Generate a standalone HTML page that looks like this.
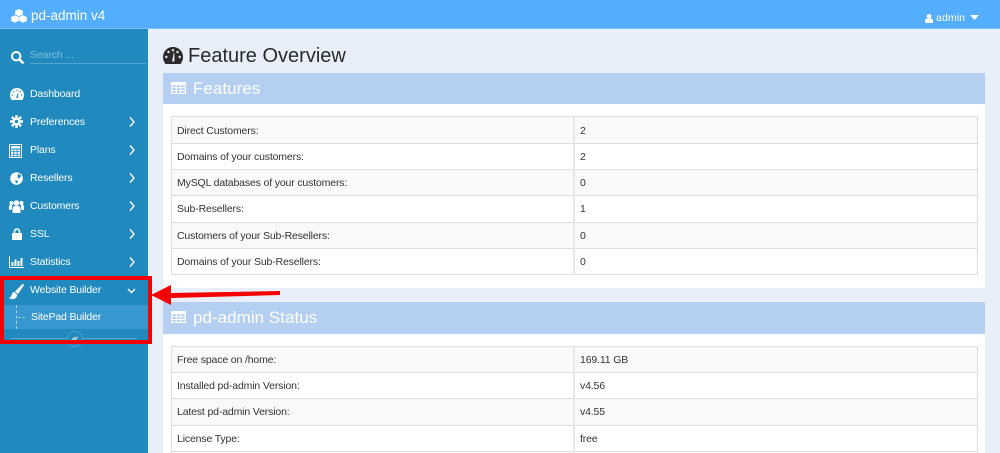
<!DOCTYPE html>
<html>
<head>
<meta charset="utf-8">
<style>
html,body{margin:0;padding:0;width:1000px;height:453px;overflow:hidden;background:#e8eff9;font-family:"Liberation Sans",sans-serif}
#wrap{position:relative;width:1000px;height:453px;overflow:hidden;background:#e8eff9}
.a{position:absolute}
.t{position:absolute;white-space:nowrap;line-height:14px}
#top{left:0;top:0;width:1000px;height:29px;background:#54aeff;border-bottom:1px solid #7fc0f5;box-sizing:border-box}
#side{left:0;top:29px;width:148px;height:424px;background:#2089bd}
.m{color:#fff;font-size:10.5px;left:30px;letter-spacing:-.15px}
.r{position:absolute;left:171px;width:807px;box-sizing:border-box;border:1px solid #dfdfdf;background:#fff}
.c{color:#333;font-size:10.5px;letter-spacing:-.15px;left:177px}
.v{color:#333;font-size:10.5px;letter-spacing:-.15px;left:580px}
.h{color:#fff;font-size:17px;line-height:18px;letter-spacing:.03px;left:193px}
svg{position:absolute;overflow:visible}
</style>
</head>
<body>
<div id="wrap">
<div class="a" id="top"></div>
<div class="a" id="side"></div>

<!-- logo -->
<svg style="left:11px;top:9px" width="16" height="14" viewBox="0 0 16 14" fill="#fff"><path d="M8 0l3.800 1.700v3.800L8 7.200 4.200 5.500V1.700z"/><path d="M4 6.200l3.800 1.700v3.900L4 13.800.2 12V7.900z"/><path d="M12 6.200l3.800 1.700V12L12 13.800 8.200 11.800V7.900z"/></svg>
<div class="t" style="left:31px;top:9px;color:#fff;font-size:13.5px;letter-spacing:0">pd-admin v4</div>

<!-- admin -->
<svg style="left:925px;top:14px" width="8" height="9" viewBox="0 0 8 9" fill="#fff"><circle cx="4" cy="2.400" r="2.400"/><path d="M0 9V6.500C0 5.300 1 4.800 2 4.800h4c1 0 2 .5 2 1.700V9z"/></svg>
<div class="t" style="left:936px;top:11px;color:#fff;font-size:10.5px;letter-spacing:.1px">admin</div>
<svg style="left:970px;top:15px" width="9" height="5" viewBox="0 0 9 5" fill="#fff"><path d="M0 0h9L4.500 5z"/></svg>

<!-- search -->
<svg style="left:11px;top:51px" width="13" height="13" viewBox="0 0 13 13" fill="none" stroke="#fff"><circle cx="5.200" cy="5.200" r="4.200" stroke-width="2"/><path d="M8.500 8.500l4 4" stroke-width="2.600"/></svg>
<div class="t" style="left:30px;top:48px;color:#7ec0e3;font-size:10.5px;letter-spacing:-.1px">Search ...</div>
<div class="a" style="left:30px;top:63px;width:116px;height:1px;background:#53a6d1"></div>

<!-- menu icons -->
<svg style="left:10px;top:88px" width="14" height="12" viewBox="0 0 14 12"><path fill="#fff" d="M7 0C3 0 0 3 0 7c0 2 .7 3.700 1.800 5h10.400C13.300 10.700 14 9 14 7c0-4-3-7-7-7z"/><g fill="#2089bd"><circle cx="2.300" cy="7" r=".7"/><circle cx="3.800" cy="3.800" r=".7"/><circle cx="7" cy="2.300" r=".7"/><circle cx="10.200" cy="3.800" r=".7"/><circle cx="11.700" cy="7" r=".7"/><path d="M6.200 10l1.700-5.500.4.100L8 10z"/></g></svg>
<div class="t m" style="top:87px">Dashboard</div>

<svg style="left:10px;top:115px" width="13" height="13" viewBox="0 0 13 13"><path stroke="#fff" stroke-width="2.400" d="M6.500 0v13M0 6.500h13M1.900 1.900l9.200 9.200M11.100 1.900l-9.200 9.200"/><circle cx="6.500" cy="6.500" r="3.900" fill="#fff"/><circle cx="6.500" cy="6.500" r="1.700" fill="#2089bd"/></svg>
<div class="t m" style="top:115px">Preferences</div>

<svg style="left:9px;top:144px" width="13" height="14" viewBox="0 0 13 14"><rect x=".5" y=".5" width="12" height="13" fill="#2089bd" stroke="#fff"/><rect x="2" y="2" width="9" height="2.500" fill="#fff"/><g fill="#fff"><rect x="2" y="5.500" width="2.400" height="1.800"/><rect x="5.300" y="5.500" width="2.400" height="1.800"/><rect x="8.600" y="5.500" width="2.400" height="1.800"/><rect x="2" y="8" width="2.400" height="1.800"/><rect x="5.300" y="8" width="2.400" height="1.800"/><rect x="8.600" y="8" width="2.400" height="1.800"/><rect x="2" y="10.500" width="2.400" height="1.800"/><rect x="5.300" y="10.500" width="2.400" height="1.800"/><rect x="8.600" y="10.500" width="2.400" height="1.800"/></g></svg>
<div class="t m" style="top:143px">Plans</div>

<svg style="left:10px;top:172px" width="13" height="13" viewBox="0 0 13 13"><circle cx="6.500" cy="6.500" r="6.300" fill="#fff"/><path fill="#2089bd" d="M8 1.500l3 2-1.300 3-2.200-1zM5.500 8l2.500 1-1 2.500-1.500-1z"/></svg>
<div class="t m" style="top:171px">Resellers</div>

<svg style="left:9px;top:200px" width="15" height="13" viewBox="0 0 15 13" fill="#fff"><circle cx="7.500" cy="3" r="2.800"/><circle cx="2.500" cy="3" r="2"/><circle cx="12.500" cy="3" r="2"/><path d="M3.500 13V8.500C3.500 7 5 6 6 6h3c1 0 2.500 1 2.500 2.500V13z"/><path d="M0 10V6.500c0-1 .8-1.700 1.700-1.700h1.500L2.600 10zM15 10V6.500c0-1-.8-1.700-1.700-1.700h-1.500l.6 5.200z"/></svg>
<div class="t m" style="top:199px">Customers</div>

<svg style="left:12px;top:228px" width="10" height="12" viewBox="0 0 10 12"><path fill="#fff" d="M0 5h10v7H0z"/><path fill="none" stroke="#fff" stroke-width="1.600" d="M2.500 5.500V3.500a2.500 2.500 0 0 1 5 0v2"/></svg>
<div class="t m" style="top:227px">SSL</div>

<svg style="left:9px;top:256px" width="15" height="12" viewBox="0 0 15 12" fill="#fff"><path d="M0 0h1v11h14v1H0z"/><rect x="2.500" y="6" width="2" height="4"/><rect x="5.500" y="3.500" width="2" height="6.500"/><rect x="8.500" y="5" width="2" height="5"/><rect x="11.500" y="2" width="2" height="8"/></svg>
<div class="t m" style="top:255px">Statistics</div>

<!-- chevrons -->
<svg style="left:129px;top:117px" width="7" height="155" fill="none" stroke="#fff" stroke-width="1.400"><path d="M1 .5l4 4.500-4 4.500M1 28.500l4 4.500-4 4.500M1 56.500l4 4.500-4 4.500M1 84.500l4 4.500-4 4.500M1 112.500l4 4.500-4 4.500M1 140.500l4 4.500-4 4.500"/></svg>

<!-- website builder -->
<div class="a" style="left:0;top:276px;width:148px;height:29px;background:#2089bd"></div>
<svg style="left:9px;top:284px" width="15" height="16" viewBox="0 0 15 16" fill="#fff"><path d="M14.600.3c.5.4.3 1.200-.3 2L9 10 6 7.500 12.800.8c.7-.6 1.400-.9 1.800-.5z"/><path d="M5.300 8C3 8.300 2.800 10 2.500 11.500 2.200 13 1 13.500 0 14c2.500 2 7.500 1.800 8.300-3.300z"/></svg>
<div class="t m" style="top:283px">Website Builder</div>
<svg style="left:127px;top:288px" width="9" height="6" fill="none" stroke="#fff" stroke-width="1.400"><path d="M1 1l3.500 3.500L8 1"/></svg>

<div class="a" style="left:0;top:305px;width:148px;height:24px;background:#3698cf"></div>
<div class="a" style="left:16px;top:305px;width:0;height:24px;border-left:1px dashed #a8d4ec"></div>
<div class="a" style="left:18px;top:317px;width:7px;height:0;border-top:1px dashed #a8d4ec"></div>
<div class="t m" style="left:31px;top:310px">SitePad Builder</div>

<!-- collapse -->
<div class="a" style="left:11px;top:338px;width:126px;height:1px;background:#5aa9d2"></div>
<div class="a" style="left:67px;top:331px;width:14px;height:14px;border:1px solid #4da2cd;border-radius:50%;background:#2089bd"></div>
<svg style="left:71px;top:336px" width="7" height="5" fill="none" stroke="#fff" stroke-width="1"><path d="M1 4l3-3M3.500 4l3-3"/></svg>

<!-- title -->
<svg style="left:163px;top:47px" width="20" height="17" viewBox="0 0 20 17"><path fill="#2b2b2b" d="M10 0C4.500 0 0 4.300 0 10c0 2.600.9 5 2.500 7h15c1.600-2 2.500-4.400 2.500-7 0-5.700-4.500-10-10-10z"/><g fill="#e8eff9"><circle cx="3.300" cy="10" r="1.200"/><circle cx="5.500" cy="5" r="1.200"/><circle cx="10" cy="3.200" r="1.200"/><circle cx="14.500" cy="5" r="1.200"/><circle cx="16.700" cy="10" r="1.200"/><path d="M9 14.500l1.800-9 .5.100L11.500 14.500z"/></g></svg>
<div class="t" style="left:188px;top:44px;color:#2b2b2b;font-size:20px;line-height:24px;letter-spacing:0">Feature Overview</div>

<!-- panel 1 -->
<div class="a" style="left:163px;top:73px;width:822px;height:31px;background:#b4cff1"></div>
<div class="a" style="left:163px;top:104px;width:822px;height:184px;background:#fff"></div>
<svg style="left:171px;top:82px" width="15" height="12" viewBox="0 0 15 12"><path fill="#fff" fill-rule="evenodd" d="M0 0h15v12H0zM1.200 3.200v1.900h3.600V3.200zm4.600 0v1.900h3.400V3.200zm4.400 0v1.900h3.600V3.200zM1.200 6.100V8h3.600V6.100zm4.600 0V8h3.400V6.100zm4.400 0V8h3.600V6.100zM1.200 9v1.900h3.600V9zm4.600 0v1.900h3.400V9zm4.400 0v1.900h3.600V9z"/></svg>
<div class="t h" style="top:80px">Features</div>

<div class="r" style="top:116px;height:28px;background:#f9f9f9"></div>
<div class="r" style="top:143px;height:27px"></div>
<div class="r" style="top:169px;height:27px;background:#f9f9f9"></div>
<div class="r" style="top:195px;height:28px"></div>
<div class="r" style="top:222px;height:27px;background:#f9f9f9"></div>
<div class="r" style="top:248px;height:27px"></div>
<div class="a" style="left:573px;top:116px;width:2px;height:159px;background:#e8e8e8"></div>

<div class="t c" style="top:124px">Direct Customers:</div><div class="t v" style="top:124px">2</div>
<div class="t c" style="top:150px">Domains of your customers:</div><div class="t v" style="top:150px">2</div>
<div class="t c" style="top:176px">MySQL databases of your customers:</div><div class="t v" style="top:176px">0</div>
<div class="t c" style="top:202px">Sub-Resellers:</div><div class="t v" style="top:202px">1</div>
<div class="t c" style="top:229px">Customers of your Sub-Resellers:</div><div class="t v" style="top:229px">0</div>
<div class="t c" style="top:255px">Domains of your Sub-Resellers:</div><div class="t v" style="top:255px">0</div>

<!-- panel 2 -->
<div class="a" style="left:163px;top:302px;width:822px;height:32px;background:#b4cff1"></div>
<div class="a" style="left:163px;top:334px;width:822px;height:119px;background:#fff"></div>
<svg style="left:171px;top:311px" width="15" height="12" viewBox="0 0 15 12"><path fill="#fff" fill-rule="evenodd" d="M0 0h15v12H0zM1.200 3.200v1.900h3.600V3.200zm4.600 0v1.900h3.400V3.200zm4.400 0v1.900h3.600V3.200zM1.200 6.100V8h3.600V6.100zm4.600 0V8h3.400V6.100zm4.400 0V8h3.600V6.100zM1.200 9v1.900h3.600V9zm4.600 0v1.900h3.400V9zm4.400 0v1.900h3.600V9z"/></svg>
<div class="t h" style="top:309px">pd-admin Status</div>

<div class="r" style="top:346px;height:27px;background:#f9f9f9"></div>
<div class="r" style="top:372px;height:27px"></div>
<div class="r" style="top:398px;height:28px;background:#f9f9f9"></div>
<div class="r" style="top:425px;height:27px"></div>
<div class="r" style="top:451px;height:10px;background:#f9f9f9"></div>
<div class="a" style="left:573px;top:346px;width:2px;height:107px;background:#e8e8e8"></div>

<div class="t c" style="top:353px">Free space on /home:</div><div class="t v" style="top:353px">169.11 GB</div>
<div class="t c" style="top:379px">Installed pd-admin Version:</div><div class="t v" style="top:379px">v4.56</div>
<div class="t c" style="top:405px">Latest pd-admin Version:</div><div class="t v" style="top:405px">v4.55</div>
<div class="t c" style="top:432px">License Type:</div><div class="t v" style="top:432px">free</div>

<!-- red annotation -->
<div class="a" style="left:0;top:276px;width:152px;height:68px;box-sizing:border-box;border:4px solid #f40000"></div>
<svg style="left:150px;top:284px" width="131" height="22" viewBox="0 0 131 22"><path fill="#f40000" d="M1 11L21 1v8L130 7v4L21 14v7z"/></svg>
</div>
</body>
</html>
